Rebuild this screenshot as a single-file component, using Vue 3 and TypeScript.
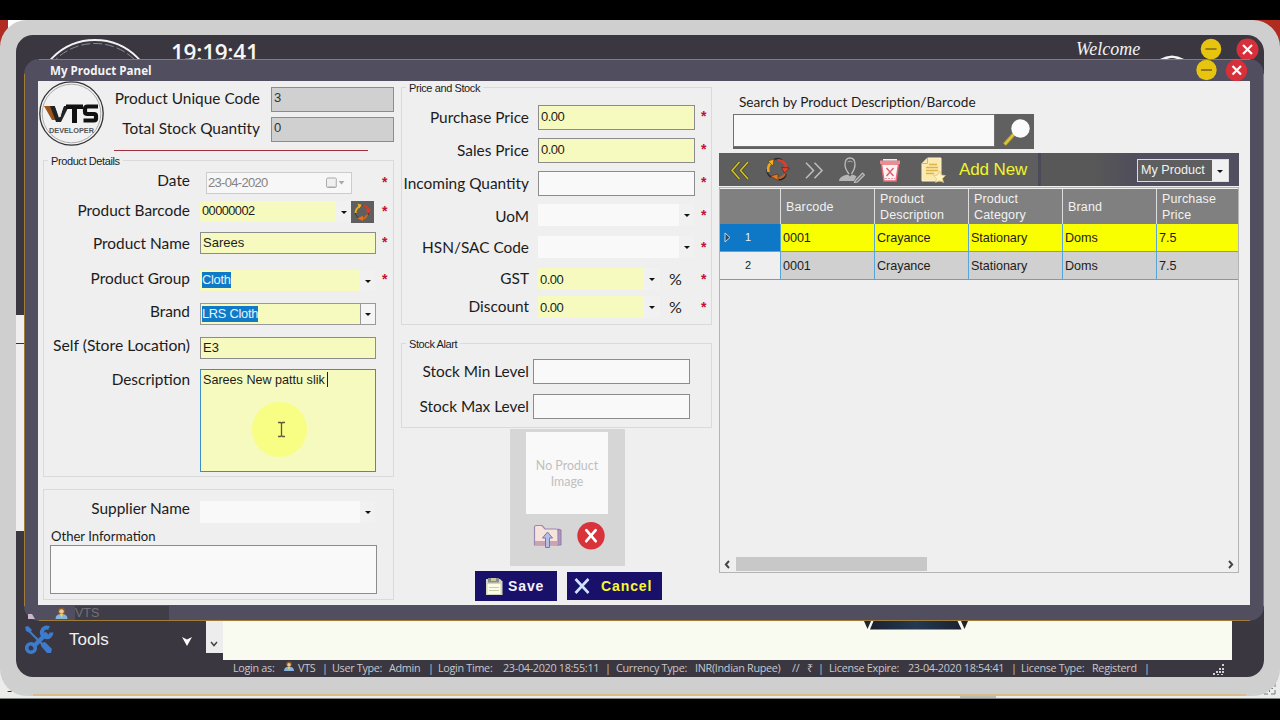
<script setup lang="ts">
interface Field {
  id: string
  label: string
  kind: 'input' | 'combo' | 'date' | 'area'
  value?: string
  required?: boolean
  selected?: boolean
  bordered?: boolean
  unit?: string
}

const details: Field[] = [
  { id: 'date', label: 'Date', kind: 'date', value: '23-04-2020', required: true },
  { id: 'barcode', label: 'Product Barcode', kind: 'combo', value: '00000002', required: true },
  { id: 'name', label: 'Product Name', kind: 'input', value: 'Sarees', required: true },
  { id: 'group', label: 'Product Group', kind: 'combo', value: 'Cloth', selected: true, required: true },
  { id: 'brand', label: 'Brand', kind: 'combo', value: 'LRS Cloth', selected: true, bordered: true },
  { id: 'self', label: 'Self (Store Location)', kind: 'input', value: 'E3' },
  { id: 'desc', label: 'Description', kind: 'area', value: 'Sarees New pattu slik' },
]

const prices: Field[] = [
  { id: 'purchase', label: 'Purchase Price', kind: 'input', value: '0.00' },
  { id: 'sales', label: 'Sales Price', kind: 'input', value: '0.00' },
  { id: 'incoming', label: 'Incoming Quantity', kind: 'input' },
  { id: 'uom', label: 'UoM', kind: 'combo' },
  { id: 'hsn', label: 'HSN/SAC Code', kind: 'combo' },
  { id: 'gst', label: 'GST', kind: 'combo', value: '0.00', unit: '%' },
  { id: 'discount', label: 'Discount', kind: 'combo', value: '0.00', unit: '%' },
]

const columns = ['Barcode', 'Product Description', 'Product Category', 'Brand', 'Purchase Price']
const rows = [
  ['0001', 'Crayance', 'Stationary', 'Doms', '7.5'],
  ['0001', 'Crayance', 'Stationary', 'Doms', '7.5'],
]

const status = [
  'VTS', '|', 'User Type:', 'Admin', '|', 'Login Time:', '23-04-2020 18:55:11', '|',
  'Currency Type:', 'INR(Indian Rupee)', '//', '₹', '|', 'License Expire:',
  '23-04-2020 18:54:41', '|', 'License Type:', 'Registerd', '|',
]
</script>

<template>
  <div class="screen">
    <div class="desktop">
      <span class="desk-text">Sli</span>
      <svg class="fit-icon" width="13" height="13" viewBox="0 0 13 13"><path d="M1 5V1h4M8 1h4v4M12 8v4H8M5 12H1V8M6.500 3v7M3 6.500h7" fill="none" stroke="#777" /></svg>
      <div class="desk-thumb"></div>
    </div>

    <div class="frame">
      <div class="main">
        <header class="main-head">
          <svg class="main-logo" width="92" height="24" viewBox="49 35 92 24">
            <circle cx="95" cy="100" r="60" fill="none" stroke="#f2f2f2" stroke-width="1.8" />
            <circle cx="95" cy="100" r="56.5" fill="none" stroke="#8b8992" stroke-width="1" stroke-dasharray="9 3" />
          </svg>
          <span class="clock">19:19:41</span>
          <span class="welcome">Welcome</span>
          <svg class="avatar" width="24" height="4" viewBox="0 0 24 4"><path d="M0 4Q12-3 24 4" fill="#f4f4f4" /><path d="M7 4q5-2 10 0" fill="#3a3741" /></svg>
          <svg class="dots" width="60" height="24" viewBox="0 0 60 24">
            <circle cx="11" cy="14" r="10.300" fill="#e6c40f" /><path d="M5.500 14h11" stroke="#7c6812" stroke-width="1.600" />
            <circle cx="47.500" cy="14.500" r="11" fill="#d7303b" /><path d="M43 10l9 9m0-9l-9 9" stroke="#fff" stroke-width="2.200" />
          </svg>
        </header>
        <div class="side-strip"><i></i></div>
        <footer class="main-foot">
          <div class="tools">
            <svg width="30" height="30" viewBox="0 0 30 30">
              <path d="M3 4l17 17" stroke="#3d7ccd" stroke-width="2.200" />
              <path d="M1 2l3-1 4 4-2 3-4-2z" fill="#3d7ccd" />
              <path d="M17 18l4-1 7 7-1 4-4 0-6-7z" fill="#3d7ccd" />
              <path d="M23 8L9 22" stroke="#3d7ccd" stroke-width="4.400" />
              <path d="M25 3.200A4.800 4.800 0 1 0 27.500 7.500" fill="none" stroke="#3d7ccd" stroke-width="4" />
              <circle cx="7" cy="23" r="4.300" fill="none" stroke="#3d7ccd" stroke-width="3.600" />
            </svg>
            <span>Tools</span>
            <svg width="10" height="9" viewBox="0 0 10 9"><path d="M0 0l5 2.500L10 0 5 9z" fill="#fff" /></svg>
          </div>
          <div class="scroll-end"><svg width="8" height="6" viewBox="0 0 8 6"><path d="M1 1l3 3.500L7 1" fill="none" stroke="#444" stroke-width="1.500" /></svg></div>
          <div class="canvas">
            <svg width="105" height="9" viewBox="0 0 105 9">
              <defs><linearGradient id="navy"><stop offset="0" stop-color="#1b2230" /><stop offset=".5" stop-color="#233a52" /><stop offset="1" stop-color="#1b2230" /></linearGradient></defs>
              <path d="M0 0h7L3.500 8zM97 0h7l-3.500 8z" fill="#20242e" /><path d="M9.500 0h84l4 8.500H6z" fill="url(#navy)" />
            </svg>
          </div>
        </footer>
        <div class="status">
          <span>Login as:</span>
          <svg class="user" width="10" height="10" viewBox="0 0 12 12"><circle cx="6" cy="4" r="3.300" fill="#8a5a2c" /><circle cx="6" cy="4.500" r="2.100" fill="#f0c79a" /><path d="M0 12q0-5 6-5t6 5z" fill="#86b4dc" /><path d="M4.500 7h3L6 11z" fill="#f2d74a" /></svg>
          <span v-for="(s, i) in status" :key="i" :class="{ bar: s === '|' }">{{ s }}</span>
          <svg class="grip" width="12" height="11" viewBox="0 0 12 11"><path d="M9 0h2v2H9zM6 4h2v2H6zM9 4h2v2H9zM3 7h2v2H3zM6 7h2v2H6zM9 7h2v2H9zM0 9h2v2H0zM4 10h2v1H4zM8 10h2v1H8z" fill="#d0d0d0" /></svg>
        </div>
      </div>
    </div>

    <div class="panel">
      <i class="edge top"></i><i class="edge left"></i><i class="edge right"></i><i class="edge bottom"></i>
      <header class="panel-head">
        <span>My Product Panel</span>
        <svg width="54" height="22" viewBox="0 0 54 22">
          <circle cx="10.500" cy="11" r="10.200" fill="#e6c40f" /><path d="M5 11h11" stroke="#7c6812" stroke-width="1.600" />
          <circle cx="40.500" cy="11.500" r="10.700" fill="#d7303b" /><path d="M36.500 7l8.500 8.500m0-8.500l-8.500 8.500" stroke="#fff" stroke-width="2.200" />
        </svg>
      </header>

      <div class="content">
        <section class="col-a">
          <div class="intro">
            <svg class="logo" width="66" height="66" viewBox="0 0 66 66">
              <circle cx="33.500" cy="32.500" r="31.700" fill="#f1f1f1" stroke="#333" stroke-width="1.300" />
              <circle cx="33.500" cy="32.500" r="29.300" fill="none" stroke="#999" stroke-width=".8" />
              <path d="M6 25h7l6 14h-5z" fill="#9c541b" />
              <path d="M12 25h5l4 12 5-12h5l-8 16h-5z" fill="#222" />
              <path d="M17 24l5 12 3-11" fill="none" stroke="#f1f1f1" stroke-width="1" />
              <path d="M28 23.500h17v4.500h-6v14h-5V28h-6z" fill="#111" />
              <path d="M60 25.500H49.500q-2.500 0-2.500 2.500v2.500q0 2.500 2.500 2.500h6.500q2 0 2 2v2.500q0 2-2 2H45.500" fill="none" stroke="#111" stroke-width="4.200" />
              <text x="33.500" y="51.500" text-anchor="middle" textLength="45" lengthAdjust="spacingAndGlyphs" class="logo-sub">DEVELOPER</text>
            </svg>
            <div class="intro-rows">
              <div class="intro-row"><label>Product Unique Code</label><div class="box grey">3</div></div>
              <div class="intro-row second"><label>Total Stock Quantity</label><div class="box grey">0</div></div>
              <hr />
            </div>
          </div>

          <div class="group details">
            <span class="legend">Product Details</span>
            <div v-for="f in details" :key="f.id" class="row" :class="'f-' + f.id">
              <label>{{ f.label }}</label>
              <div v-if="f.kind === 'input'" class="box yellow">{{ f.value }}</div>
              <div v-else-if="f.kind === 'date'" class="datebox">
                <span>{{ f.value }}</span>
                <svg width="20" height="12" viewBox="0 0 20 12"><rect x=".5" y="1" width="10" height="9.500" rx="1.500" fill="#f0f0f0" stroke="#aaa" /><path d="M2 9.500h8V3" fill="none" stroke="#ccc" /><path d="M12.500 4h6l-3 3.500z" fill="#aaa" /></svg>
              </div>
              <div v-else-if="f.kind === 'combo'" class="combo" :class="{ bordered: f.bordered }">
                <div class="combo-text yellow"><mark v-if="f.selected">{{ f.value }}</mark><span v-else class="tight">{{ f.value }}</span></div>
                <i class="arrow"></i>
                <span v-if="f.id === 'barcode'" class="regen">
                  <svg width="20" height="20" viewBox="0 0 22 22">
                    <circle cx="11" cy="11" r="7.500" fill="none" stroke="#333" stroke-width="1" />
                    <path d="M4 12q0-5 4-7" fill="none" stroke="#e5a91e" stroke-width="2.200" /><path d="M6 2l5 1-3 4z" fill="#f0b51f" />
                    <path d="M12 3.500q5 1 6 5" fill="none" stroke="#d63a25" stroke-width="2.200" /><path d="M15 8l6 0-3 5z" fill="#e23a24" />
                    <path d="M17 14q-2 4-6 4.500" fill="none" stroke="#c96620" stroke-width="2.200" /><path d="M12 15v6l-6-3z" fill="#e0711d" />
                  </svg>
                </span>
              </div>
              <div v-else class="area yellow"><span>{{ f.value }}</span><i class="caret"></i></div>
              <b v-if="f.required" class="star">*</b>
            </div>
          </div>

          <div class="group supplier">
            <div class="row sup">
              <label>Supplier Name</label>
              <div class="combo"><div class="combo-text"></div><i class="arrow"></i></div>
            </div>
            <div class="other">Other Information</div>
            <div class="other-box"></div>
          </div>
        </section>

        <section class="col-b">
          <div class="group price">
            <span class="legend">Price and Stock</span>
            <div v-for="f in prices" :key="f.id" class="row" :class="'f-' + f.id">
              <label>{{ f.label }}</label>
              <div v-if="f.kind === 'input'" class="box" :class="{ yellow: f.value }"><span class="tight">{{ f.value }}</span></div>
              <div v-else class="combo" :class="{ short: f.unit }">
                <div class="combo-text" :class="{ yellow: f.value }"><span class="tight">{{ f.value }}</span></div>
                <i class="arrow"></i>
                <em v-if="f.unit">{{ f.unit }}</em>
              </div>
              <b class="star">*</b>
            </div>
          </div>

          <div class="group alart">
            <span class="legend">Stock Alart</span>
            <div class="row min"><label>Stock Min Level</label><div class="box"></div></div>
            <div class="row max"><label>Stock Max Level</label><div class="box"></div></div>
          </div>

          <div class="picture">
            <div class="noimg">No Product<br />Image</div>
            <div class="pic-tools">
              <svg width="29" height="27" viewBox="0 0 29 27">
                <path d="M25 7l3 1v15h-4z" fill="#b394bd" stroke="#9178aa" />
                <path d="M1.500 23V5q0-1.500 1.500-1.500h6L12 7h11q2 0 2 2v14z" fill="#f6e3dc" stroke="#9c87b4" stroke-width="1.200" />
                <path d="M2 19h23v4H2z" fill="#c9a3b0" />
                <path d="M14.500 10l5 6h-3v9.500h-4V16h-3z" fill="#b5bde6" stroke="#7377b5" />
              </svg>
              <svg width="28" height="28" viewBox="0 0 28 28"><circle cx="14" cy="13.700" r="13.700" fill="#d8323a" /><path d="M9.300 8.200l9.400 11m0-11l-9.400 11" stroke="#fff" stroke-width="2.700" stroke-linecap="round" /></svg>
            </div>
          </div>

          <div class="actions">
            <button class="save">
              <svg width="18" height="19" viewBox="0 0 18 19"><path d="M1 2h14l2.500 2.500V18H1z" fill="#d3d7bd" /><path d="M3 1h11v4.500H3z" fill="#8b8d8c" /><path d="M6 1h5v3H6z" fill="#c9c9a0" /><path d="M2.500 7h13V17h-13z" fill="#fbfbe6" /><path d="M4 10.500h10M4 13.500h10" stroke="#c5cfae" /></svg>
              <span>Save</span>
            </button>
            <button class="cancel">
              <svg width="16" height="16" viewBox="0 0 16 16"><path d="M1.500 1l13 14M14.500 1l-13 14" stroke="#cfe3ff" stroke-width="2.600" /></svg>
              <span>Cancel</span>
            </button>
          </div>
        </section>

        <section class="col-c">
          <label class="search-label">Search by Product Description/Barcode</label>
          <div class="search">
            <div class="search-input"></div>
            <svg width="39" height="35" viewBox="0 0 39 35"><path d="M9.500 30.500L19 20" stroke="#c9b22c" stroke-width="3.600" /><path d="M10 30L19 20" stroke="#ecd75a" stroke-width="1" /><circle cx="25.500" cy="14.500" r="9.200" fill="#fbfbfb" /></svg>
          </div>

          <div class="toolbar">
            <svg class="t1" width="20" height="19" viewBox="0 0 20 19"><path d="M9.500 1L2 9.500l7.500 8.500M18 1l-7.500 8.500L18 18" fill="none" stroke="#4b4820" stroke-width="3" /><path d="M9.500 1L2 9.500l7.500 8.500M18 1l-7.500 8.500L18 18" fill="none" stroke="#d3c52a" stroke-width="1.500" /></svg>
            <svg class="t2" width="25" height="25" viewBox="0 0 25 25">
              <path d="M8 3q5-3 9 0M2 12q0 6 4 8M14 23q6-1 7-6" fill="none" stroke="#262626" stroke-width="1.500" />
              <path d="M3.500 15q-1.500-6 2.500-9" fill="none" stroke="#eea51f" stroke-width="2.600" /><path d="M3 4l6-2-1 7z" fill="#f5b022" stroke="#553a10" stroke-width=".6" />
              <path d="M13 3q7 1 8 7" fill="none" stroke="#d8402c" stroke-width="2.600" /><path d="M16.500 10.500l8 .5-5 5z" fill="#e8432c" stroke="#51201a" stroke-width=".6" />
              <path d="M20 17q-2 4-7 4" fill="none" stroke="#c95e22" stroke-width="2" /><path d="M13 17v6.500L5.500 19z" fill="#ea751f" stroke="#522d12" stroke-width=".6" />
            </svg>
            <svg class="t3" width="19" height="17" viewBox="0 0 19 17"><path d="M1 .8l7.500 7.700L1 16.200M9.500.8l7.500 7.700-7.500 7.700" fill="none" stroke="#bcbcbc" stroke-width="1.600" /></svg>
            <svg class="t4" width="27" height="26" viewBox="0 0 27 26"><path d="M11 17Q7 12 7 7.500Q7 1 12 1T17 7.500Q17 12 13.500 17" fill="none" stroke="#bdbdbd" stroke-width="1.300" /><path d="M9.500 5q2.500-2 5 0" fill="none" stroke="#aaa" /><path d="M1 24q0-5 9-6.500l2 2 2-2q3 .5 4.500 2L16 24z" fill="#b5b5b5" /><path d="M17 24l7.500-8 2 2-7 7-3 .5z" fill="#777" stroke="#bdbdbd" stroke-width="1.100" /></svg>
            <svg class="t5" width="22" height="24" viewBox="0 0 22 24"><path d="M2.500 6h17L17 23H5z" fill="#fff3f3" stroke="#ec6a76" stroke-width="1.500" /><path d="M1 2.500h20v3.500H1z" fill="#ee8c95" /><path d="M4 1.800h14" stroke="#fff" stroke-width="1.400" /><path d="M7.500 10l7 8m0-8l-7 8" stroke="#d95f6b" stroke-width="1.400" /><path d="M6 20.500h10" stroke="#e996a0" stroke-dasharray="2 1" /></svg>
            <svg class="t6" width="25" height="26" viewBox="0 0 25 26"><path d="M6.500 1H20v23H1V6.500z" fill="#fbe9ae" stroke="#fff4cb" /><path d="M1 6.500h5.500V1" fill="none" stroke="#ddb955" /><path d="M8 7.500h8M5 10.500h12M5 13.500h12M5 16.500h8" stroke="#dcb348" stroke-width="1.300" /><path d="M18.500 14l2 4 4 .5-3 3 1 4-4-2-4 2 1-4-3-3 4-.5z" fill="#fff3c3" stroke="#e0bf60" stroke-width=".7" /></svg>
            <span class="add">Add New</span>
            <i class="band"></i>
            <div class="filter"><span>My Product</span><i class="arrow"></i></div>
          </div>

          <div class="grid">
            <div class="grid-head">
              <div></div>
              <div v-for="c in columns" :key="c"><span>{{ c }}</span></div>
            </div>
            <div v-for="(r, i) in rows" :key="i" class="grid-row" :class="{ current: i === 0 }">
              <div class="num">
                <svg v-if="i === 0" width="7" height="11" viewBox="0 0 7 11"><path d="M1 1l5 4.500L1 10z" fill="#33475a" stroke="#bcdaf0" /></svg>
                <span>{{ i + 1 }}</span>
              </div>
              <div v-for="(c, j) in r" :key="j">{{ c }}</div>
            </div>
            <div class="hscroll">
              <svg width="7" height="9" viewBox="0 0 7 9"><path d="M5 1L1.800 4.500 5 8" fill="none" stroke="#444" stroke-width="1.900" /></svg>
              <i></i>
              <svg width="7" height="9" viewBox="0 0 7 9"><path d="M2 1l3.200 3.500L2 8" fill="none" stroke="#444" stroke-width="1.900" /></svg>
            </div>
          </div>
        </section>
      </div>

      <div class="ghost">
        <svg class="chip" width="8" height="6" viewBox="0 0 8 6"><path d="M1 0h4l3 5H1z" fill="#c9b6cf" /></svg>
        <svg width="13" height="12" viewBox="0 0 12 12"><circle cx="6" cy="4" r="3.500" fill="#8a5a2c" /><circle cx="6" cy="4.500" r="2.300" fill="#f0c79a" /><path d="M0 12q0-5 6-5t6 5z" fill="#86b4dc" /><path d="M4.500 7h3L6 11z" fill="#f2d74a" /></svg>
        <span>VTS</span>
      </div>
    </div>

    <div class="pointer">
      <svg width="9" height="17" viewBox="0 0 9 17"><path d="M1 1.500h2.500l1 1 1-1H8M1 15.500h2.500l1-1 1 1H8M4.500 2.500v12" fill="none" stroke="#5c5c3a" stroke-width="1.300" /></svg>
    </div>
  </div>
</template>

<style>
body { background: #000; overflow: hidden; }
</style>

<style scoped>
* { box-sizing: border-box; }
.screen { position: relative; width: 1280px; height: 720px; overflow: hidden; background: #000; font-family: Lato, "Noto Sans", sans-serif; color: #1c1c1c; }
.desktop { position: absolute; top: 20px; left: 0; width: 1280px; height: 679px; background: linear-gradient(#b02c20 0 60px, #ececec 60px); border-bottom: 1px solid #7f8580; }
.desktop::before { content: ""; position: absolute; left: 8px; top: 0; width: 20px; height: 12px; background: #fff; }
.desk-text { position: absolute; left: 7px; bottom: 2px; font: 10.500px/16px "Open Sans", sans-serif; }
.fit-icon { position: absolute; left: 1263px; top: 662px; }
.desk-thumb { position: absolute; left: 960px; bottom: 0; width: 36px; height: 4px; background: #b9bdb4; }
.frame { position: absolute; left: 0; top: 20px; width: 1280px; height: 676px; padding: 15px 16px 0; background: #cfcfcf; border-radius: 27px; }
.frame::after { content: ""; position: absolute; left: 33px; right: 34px; bottom: 0; height: 2px; background: #d7bf87; }
.main { position: relative; display: flex; flex-direction: column; width: 1248px; height: 642px; background: #3a3741; border-radius: 17px; overflow: hidden; }
.main-head { display: flex; height: 24px; flex: none; overflow: hidden; }
.main-logo { margin-left: 33px; flex: none; }
.clock { margin-left: 30px; width: 90px; font: 600 22.500px/36px "Open Sans", sans-serif; color: #f6f6f6; letter-spacing: -.25px; white-space: nowrap; }
.welcome { margin-left: 815px; width: 84px; font: italic 18px/29px "Liberation Serif", serif; color: #f3f3f3; }
.avatar { margin-top: 20px; flex: none; }
.dots { margin-left: 16px; flex: none; }
.side-strip { width: 8px; height: 216px; margin-top: 256px; background: #efefef; padding-top: 28px; flex: none; }
.side-strip i { display: block; height: 1px; background: #333; }
.main-foot { display: flex; margin-top: 90px; height: 39px; flex: none; }
.tools { display: flex; width: 190px; padding: 4px 0 0 8px; font: 17px/28px "Liberation Sans", sans-serif; color: #f1f1f1; }
.tools span { margin-left: 15px; width: 113px; line-height: 29px; }
.tools svg { flex: none; }
.tools svg:last-child { margin-top: 12px; }
.scroll-end { width: 17px; height: 32px; background: #ededed; padding: 20px 0 0 4px; }
.scroll-end svg { display: block; }
.canvas { width: 1009px; background: #f9faf0; height: 39px; padding-left: 641px; }
.canvas svg { display: block; }
.status { display: grid; grid-template-columns: 51px 14px 26px 8px 57px 41px 8px 65px 104px 9px 79px 97px 15px 13px 9px 79px 105px 8px 71px 54px 67px 12px; height: 17px; margin-left: 217px; font: 10.800px/16px "Open Sans", "Noto Sans", sans-serif; letter-spacing: -.3px; color: #c9c8cc; white-space: nowrap; }
.status .bar { margin-left: -2px; }
.status .user { margin-top: 1px; }
.status .grip { margin-top: 4px; }

.panel { position: absolute; left: 24px; top: 59px; width: 1240px; height: 562px; background: #504e5f; border-radius: 15px; }
.edge { position: absolute; background: #a07c38; }
.edge.top { left: 15px; right: 14px; top: 0; height: 1px; }
.edge.bottom { left: 15px; right: 14px; bottom: 0; height: 1px; }
.edge.left { left: 0; top: 15px; bottom: 15px; width: 1px; }
.edge.right { right: 0; top: 15px; bottom: 15px; width: 1px; }
.panel-head { display: flex; justify-content: space-between; height: 22px; padding: 0 14px 0 26px; font: bold 11.600px/24px "Open Sans", sans-serif; color: #f4f4f4; }
.panel-head svg { display: block; }
.content { display: grid; grid-template-columns: 363px 318px 521px; width: 1212px; height: 524px; margin-left: 14px; background: #efefef; }
.col-a, .col-b, .col-c { min-width: 0; }

.row label, .intro-row label { text-align: right; font-size: 15.400px; line-height: 20px; height: 20px; white-space: nowrap; }
.box { border: 1px solid #8c8c8c; background: #f9f9f9; padding-left: 2px; font: 13px/20px "Liberation Sans", sans-serif; }
.grey { background: #d0d0d0; height: 25px; width: 123px; color: #333; }
.yellow { background: #f7fabf; }
.tight { letter-spacing: -.55px; }
.intro { display: flex; height: 79px; }
.logo { flex: none; }
.logo-sub { font: bold 7.500px "Liberation Sans", sans-serif; fill: #555; }
.intro-rows { width: 290px; padding-top: 6px; }
.intro-row { display: grid; grid-template-columns: 156px 123px; column-gap: 11px; }
.intro-row label { margin-top: 1px; }
.intro-row.second { margin-top: 5px; }
.intro hr { margin: 8px 0 0 10px; width: 254px; border: 0; height: 1px; background: #a03040; }

.group { position: relative; margin-left: 5px; border: 1px solid #dadada; width: 351px; }
.legend { position: absolute; left: 4px; top: -7px; padding: 0 3px; background: #efefef; font: 11px/14px "Liberation Sans", sans-serif; letter-spacing: -.4px; white-space: nowrap; }
.details { height: 317px; padding-top: 11px; }
.row { display: grid; grid-template-columns: 146px 176px 12px; column-gap: 10px; }
.star { color: #c41230; font: bold 14px/16px "Liberation Sans", sans-serif; margin: 2px 0 0 -4px; }
.combo { display: flex; height: 21px; }
.combo-text { width: 160px; background: #f9f9f9; padding-left: 2px; font: 12.800px/20px "Liberation Sans", sans-serif; }
.combo-text.yellow { background: #f7fabf; }
.combo mark { display: inline-block; height: 16px; line-height: 16px; background: #0f7ac8; color: #e9f3ff; letter-spacing: -.25px; }
.arrow { display: block; width: 15px; background: #f1f1f1; position: relative; flex: none; }
.arrow::after { content: ""; position: absolute; left: 5px; top: 10px; border: 3px solid transparent; border-top: 3px solid #111; border-bottom: 0; }
.combo.bordered { height: 22px; border: 1px solid #999; }
.combo.bordered .combo-text { width: 159px; padding-left: 1px; line-height: 19px; }
.combo.bordered .arrow { border-left: 1px solid #999; background: #f5f5f5; }
.combo.bordered .arrow::after { left: 4px; top: 9px; }
.datebox { display: flex; justify-content: space-between; margin-left: 6px; width: 146px; height: 22px; border: 1px solid #ccc; background: #f7f7f7; padding: 0 5px 0 1px; color: #848484; font: 13px/20px "Liberation Sans", sans-serif; letter-spacing: -.7px; }
.datebox svg { margin-top: 4px; }
.f-date { height: 29px; }
.f-date label { margin-top: -2px; }
.f-barcode { height: 31px; }
.f-barcode label { margin-top: -1px; }
.f-barcode .combo-text { width: 136px; }
.regen { width: 23px; height: 22px; background: #5f5f5f; padding: 1px; }
.regen svg { display: block; }
.f-name { height: 38px; }
.f-name label { margin-top: 1px; }
.f-name .box, .f-self .box { height: 22px; }
.f-group { height: 33px; }
.f-group label { margin-top: -2px; }
.f-group .star { margin-top: 1px; }
.f-brand { height: 34px; }
.f-brand label { margin-top: -2px; }
.f-self { height: 32px; }
.f-self label { margin-top: -2px; font-size: 15.700px; }
.area { height: 103px; border: 1px solid #3c8fc4; padding-left: 2px; font: 12.600px/20px "Liberation Sans", sans-serif; display: flex; }
.area .caret { width: 1px; height: 15px; margin: 2px 0 0 2px; background: #222; }
.supplier { height: 111px; margin-top: 12px; padding-top: 11px; }
.sup .combo { height: 22px; }
.sup label { margin-top: -3px; }
.other { margin: 4px 0 0 7px; font-size: 13.100px; line-height: 18px; }
.other-box { margin: 0 0 0 6px; width: 327px; height: 49px; border: 1px solid #8c8c8c; background: #f9f9f9; }

.col-b .group { margin-left: 0; width: 311px; }
.price { height: 238px; margin-top: 6px; padding-top: 17px; }
.col-b .row { grid-template-columns: 127px 157px 12px; column-gap: 9px; height: 33px; }
.col-b .box { height: 25px; line-height: 21px; }
.col-b .combo { height: 22px; }
.col-b .combo-text { width: 141px; }
.col-b .combo.short { height: 22px; }
.col-b .short .combo-text { width: 106px; line-height: 23px; font-size: 13px; }
.col-b .short .arrow { width: 16px; }
.combo em { font: 16px/22px Lato, sans-serif; margin-left: 9px; }
.col-b .row label { margin-top: 2px; }
.col-b .row.f-hsn { height: 32px; }
.col-b .row.f-uom { height: 32px; }
.col-b .row.f-hsn label { margin-top: 1px; }
.col-b .row.f-gst { height: 28px; }
.col-b .row.f-gst label, .col-b .row.f-discount label { margin-top: 0; }
.col-b .star { margin-top: 3px; margin-left: -3px; }
.alart { height: 85px; margin-top: 18px; padding-top: 15px; }
.col-b .alart .row { column-gap: 4px; height: 35px; }
.picture { width: 115px; height: 137px; margin: 1px 0 0 109px; background: #d6d6d6; padding: 3px 16px; }
.noimg { width: 82px; height: 82px; background: #f9f9f9; text-align: center; padding-top: 26px; font-size: 12.400px; line-height: 16px; color: #bfbfbf; }
.pic-tools { display: flex; padding: 8px 0 0 7px; gap: 15px; }
.pic-tools svg { flex: none; }
.actions { display: flex; gap: 10px; margin: 5px 0 0 74px; align-items: center; }
button { display: flex; align-items: center; border: 0; background: #181069; padding: 0; font: bold 14px/20px "Liberation Sans", sans-serif; letter-spacing: .9px; color: #f3f3ff; }
.save { width: 82px; height: 30px; padding-left: 10px; gap: 5px; }
.cancel { width: 95px; height: 28px; padding-left: 7px; gap: 11px; color: #f8f82c; }

.search-label { display: block; margin: 12px 0 0 20px; font-size: 13.650px; line-height: 19px; height: 20px; white-space: nowrap; }
.search { display: flex; width: 301px; height: 35px; margin: 1px 0 0 14px; background: #606060; }
.search-input { width: 262px; height: 33px; border: 1px solid #707070; background: #f9f9f9; }
.toolbar { display: flex; width: 520px; height: 33px; margin-top: 4px; align-items: flex-start; background: linear-gradient(90deg, #5e5e5e 410px, #504e5f 415px); }
.toolbar svg { flex: none; }
.t1 { margin: 8px 0 0 11px; }
.t2 { margin: 4px 0 0 15px; }
.t3 { margin: 9px 0 0 15px; }
.t4 { margin: 4px 0 0 14px; }
.t5 { margin: 5px 0 0 14px; }
.t6 { margin: 4px 0 0 20px; }
.add { width: 79px; margin-left: 13px; font: 17px/33px "Liberation Sans", sans-serif; color: #f0f52c; white-space: nowrap; letter-spacing: -.1px; }
.band { width: 98px; height: 33px; margin-right: 1px; background: linear-gradient(90deg, #4b4a58 0 3px, #585858 3px 55px, #504e5b 95px); }
.filter { display: flex; flex: none; width: 92px; height: 23px; margin-top: 6px; border: 1px solid #dcdcdc; background: #5e5e5e; color: #f1f1f1; }
.filter span { width: 74px; padding-left: 3px; font: 12.600px/21px "Liberation Sans", sans-serif; white-space: nowrap; }
.filter .arrow { width: 16px; }
.grid { display: flex; flex-direction: column; width: 520px; height: 386px; border: 1px solid #b4b4b4; margin-top: 1px; background: #efefef; }
.grid-head, .grid-row { display: grid; grid-template-columns: 61px 94px 94px 94px 94px 81px; }
.grid-head { height: 36px; background: #808080; color: #f2f2f2; font: 12.500px/16px "Liberation Sans", sans-serif; letter-spacing: .15px; border-top: 1px solid #efefef; }
.grid-head > div { display: flex; align-items: center; padding: 1px 14px 0 5px; border-right: 1px solid #ddd; }
.grid-head > div:last-child { border: 0; }
.grid-row { height: 28px; background: #d0d0d0; border-bottom: 1px solid #58a5d6; font: 12.600px/29px "Liberation Sans", sans-serif; letter-spacing: -.05px; }
.grid-row > div { padding-left: 2px; height: 27px; border-right: 1px solid #58a5d6; }
.grid-row > div:last-child { border: 0; }
.grid-row.current { background: #faff00; }
.grid-row .num { display: flex; align-items: center; justify-content: flex-end; padding-right: 29px; background: #efefef; font-size: 11px; }
.grid-row.current .num { background: #0f78c6; color: #e6f2ff; justify-content: space-between; padding-left: 4px; }
.hscroll { display: flex; align-items: center; height: 16px; margin-top: auto; padding: 0 4px; }
.hscroll i { width: 191px; height: 14px; margin: 0 auto 0 5px; background: #c8c8c8; }
.ghost { display: flex; position: absolute; left: 51px; top: 547px; width: 94px; height: 14px; background: #3f3d48; font: 12.500px/14px "Liberation Sans", sans-serif; color: #72717b; }
.ghost > svg { position: absolute; left: -20px; top: 1px; }
.ghost > .chip { left: -48px; top: 8px; }
.pointer { position: absolute; left: 252px; top: 402px; width: 55px; height: 55px; border-radius: 50%; background: rgba(249, 255, 74, .5); display: flex; align-items: center; justify-content: center; padding-left: 3px; }
</style>
